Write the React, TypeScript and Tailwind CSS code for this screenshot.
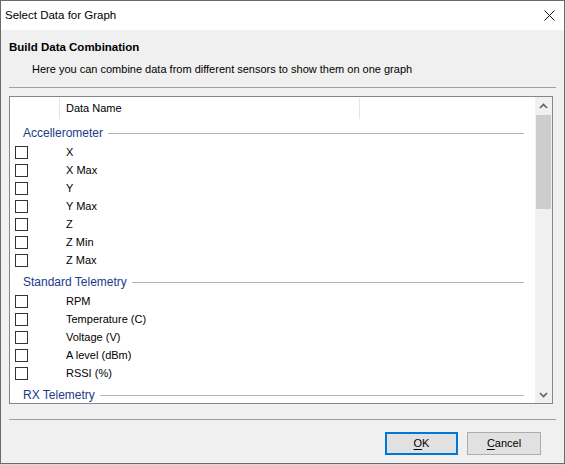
import { FC } from "react";

const font = { fontFamily: '"Liberation Sans", Arial, sans-serif' };

const groups: { name: string; items: string[] }[] = [
  { name: "Accellerometer", items: ["X", "X Max", "Y", "Y Max", "Z", "Z Min", "Z Max"] },
  { name: "Standard Telemetry", items: ["RPM", "Temperature (C)", "Voltage (V)", "A level (dBm)", "RSSI (%)"] },
  { name: "RX Telemetry", items: [] },
];

const GroupRow: FC<{ name: string }> = ({ name }) => (
  <div className="h-[23px] flex items-end pb-px pl-[13px] pr-[11px] shrink-0">
    <div className="flex items-center w-full h-[18px]">
      <span className="text-[12px] text-[#213a8a] whitespace-nowrap">{name}</span>
      <div className="flex-1 ml-[5px] h-px bg-[#a9b7c9]" />
    </div>
  </div>
);

const ItemRow: FC<{ label: string }> = ({ label }) => (
  <div className="h-[18px] flex items-center shrink-0">
    <div className="ml-[5px] w-[13px] h-[13px] border border-[#333333] bg-white" />
    <span className="ml-[38px] text-[11px] text-black">{label}</span>
  </div>
);

const Chevron: FC<{ up?: boolean }> = ({ up }) => (
  <svg width="9" height="6" viewBox="0 0 9 6">
    <polyline
      points={up ? "1,5 4.5,1.5 8,5" : "1,1 4.5,4.5 8,1"}
      fill="none"
      stroke="#606060"
      strokeWidth="1.6"
    />
  </svg>
);

const App: FC = () => {
  return (
    <div className="w-[566px] h-[465px] bg-[#d9d9d9]" style={font}>
      <div className="w-[565px] h-[464px] border border-[#6b6b6b] bg-[#f0f0f0] flex flex-col">
        {/* title bar */}
        <div className="h-[29px] bg-white flex items-center justify-between shrink-0">
          <span className="ml-[4px] text-[11.5px] text-black">Select Data for Graph</span>
          <svg width="11" height="11" viewBox="0 0 11 11" className="mr-[9px]">
            <path d="M0.5 0.5 L10.5 10.5 M10.5 0.5 L0.5 10.5" stroke="#111" strokeWidth="1" />
          </svg>
        </div>

        <div className="flex flex-col px-[8px]">
          <div className="mt-[10px] h-[16px] flex items-center text-[11.5px] font-bold text-black">
            Build Data Combination
          </div>
          <div className="mt-[5px] h-[16px] flex items-center pl-[23px] text-[11px] text-black">
            Here you can combine data from different sensors to show them on one graph
          </div>
          <div className="mt-[10px] h-px bg-[#a0a0a0]" />

          {/* list box */}
          <div className="mt-[8px] h-[308px] w-[544px] border border-[#828790] bg-white flex overflow-hidden">
            <div className="flex-1 flex flex-col overflow-hidden">
              <div className="h-[23px] flex items-stretch shrink-0">
                <div className="w-[50px] border-r border-[#e5e5e5] my-[1px]" />
                <div className="w-[300px] border-r border-[#e5e5e5] my-[1px] flex items-center pl-[6px] text-[11px] text-black">
                  Data Name
                </div>
              </div>
              {groups.map((g) => (
                <div key={g.name} className="flex flex-col">
                  <GroupRow name={g.name} />
                  {g.items.map((it) => (
                    <ItemRow key={it} label={it} />
                  ))}
                </div>
              ))}
            </div>
            {/* scrollbar */}
            <div className="w-[17px] bg-[#f0f0f0] flex flex-col shrink-0">
              <div className="h-[17px] flex items-center justify-center">
                <Chevron up />
              </div>
              <div className="flex-1 flex flex-col">
                <div className="mt-px h-[94px] mx-px bg-[#cdcdcd]" />
              </div>
              <div className="h-[17px] flex items-center justify-center">
                <Chevron />
              </div>
            </div>
          </div>

          <div className="mt-[15px] h-px bg-[#a0a0a0]" />

          <div className="mt-[12px] flex justify-end gap-[9px] pr-[15px]">
            <button className="w-[73px] h-[23px] border-2 border-[#0078d7] bg-[#e1e1e1] text-[11px] text-black">
              <span className="underline underline-offset-2">O</span>K
            </button>
            <button className="w-[74px] h-[23px] border border-[#adadad] bg-[#e1e1e1] text-[11px] text-black">
              <span className="underline underline-offset-2">C</span>ancel
            </button>
          </div>
        </div>
      </div>
    </div>
  );
};

export default App;
